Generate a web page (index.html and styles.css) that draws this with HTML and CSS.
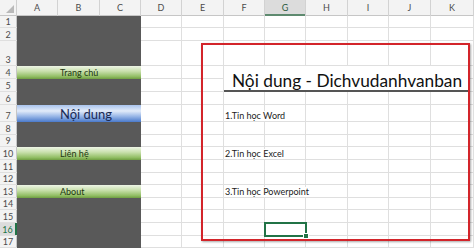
FILE: index.html
```html
<!DOCTYPE html>
<html lang="vi">
<head>
    <meta charset="UTF-8">
    <meta name="viewport" content="width=device-width, initial-scale=1.0">
    <title>Menu - Excel</title>
    <link rel="stylesheet" href="styles.css">
</head>
<body>

<div class="sheet">
    <!-- column lines and headers -->
    <div class="cols">
        <div class="head-col"><div class="corner"><span class="corner-tri"></span></div></div>
        <div class="col"><div class="col-head">A</div></div>
        <div class="col w42"><div class="col-head">B</div></div>
        <div class="col"><div class="col-head">C</div></div>
        <div class="col"><div class="col-head">D</div></div>
        <div class="col w42"><div class="col-head">E</div></div>
        <div class="col"><div class="col-head">F</div></div>
        <div class="col"><div class="col-head sel">G</div></div>
        <div class="col w42"><div class="col-head">H</div></div>
        <div class="col"><div class="col-head">I</div></div>
        <div class="col w42"><div class="col-head">J</div></div>
        <div class="col w43"><div class="col-head">K</div></div>
    </div>

    <!-- row lines and headers -->
    <div class="rows">
        <div class="row h12"><div class="row-head">1</div></div>
        <div class="row"><div class="row-head">2</div></div>
        <div class="row h25"><div class="row-head">3</div></div>
        <div class="row"><div class="row-head">4</div></div>
        <div class="row"><div class="row-head">5</div></div>
        <div class="row"><div class="row-head">6</div></div>
        <div class="row h17"><div class="row-head">7</div></div>
        <div class="row"><div class="row-head">8</div></div>
        <div class="row h12"><div class="row-head">9</div></div>
        <div class="row"><div class="row-head">10</div></div>
        <div class="row"><div class="row-head">11</div></div>
        <div class="row h12"><div class="row-head">12</div></div>
        <div class="row"><div class="row-head">13</div></div>
        <div class="row h12"><div class="row-head">14</div></div>
        <div class="row"><div class="row-head">15</div></div>
        <div class="row"><div class="row-head sel">16</div></div>
        <div class="row h12"><div class="row-head">17</div></div>
    </div>

    <!-- cell contents -->
    <div class="cells">
        <div class="panel"></div>
        <div class="btn home">Trang chủ</div>
        <div class="btn-main">Nội dung</div>
        <div class="btn contact">Liên hệ</div>
        <div class="btn about">About</div>

        <div class="title">Nội dung - Dichvudanhvanban</div>
        <div class="item word"><span>1.Tin học Word</span></div>
        <div class="item excel"><span>2.Tin học Excel</span></div>
        <div class="item ppt"><span>3.Tin học Powerpoint</span></div>

        <div class="cursor"></div>
        <div class="frame"></div>
    </div>
</div>

</body>
</html>
```
FILE: styles.css
```css
body {
    margin: 0;
    padding: 0;
    background: #fff;
    font-family: Lato, "Open Sans", sans-serif;
}
.sheet {
    display: grid;
    width: 474px;
    height: 248px;
    overflow: hidden;
}
.sheet > * {
    grid-area: 1 / 1;
}

/* columns */
.cols {
    display: flex;
}
.head-col {
    width: 17px;
}
.corner {
    height: 16px;
    box-sizing: border-box;
    background: #f3f3f3;
    border-right: 1px solid #cfcfcf;
    border-bottom: 1px solid #c6c6c6;
    display: flex;
    align-items: flex-end;
    justify-content: flex-end;
    padding: 0 2px 2px 0;
}
.corner-tri {
    width: 0;
    height: 0;
    border-left: 8px solid transparent;
    border-bottom: 8px solid #b9b9b9;
}
.col {
    width: 41px;
    box-sizing: border-box;
    border-right: 1px solid #dfdfdf;
}
.col.w42 { width: 42px; }
.col.w43 { width: 43px; }
.col-head {
    height: 16px;
    box-sizing: border-box;
    background: #f3f3f3;
    border-bottom: 1px solid #c6c6c6;
    box-shadow: 1px 0 0 #d2d2d2;
    display: flex;
    align-items: center;
    justify-content: center;
    font-size: 9px;
    color: #4b4b4b;
}
.col-head.sel {
    background: #dcdcdc;
    border-bottom: 2px solid #5e8a6f;
    color: #2c5b3e;
}

/* rows */
.rows {
    display: flex;
    flex-direction: column;
    padding-top: 16px;
}
.row {
    height: 13px;
    box-sizing: border-box;
    border-bottom: 1px solid #dfdfdf;
}
.row.h12 { height: 12px; }
.row.h17 { height: 17px; }
.row.h25 { height: 25px; }
.row-head {
    width: 17px;
    height: 100%;
    box-sizing: border-box;
    background: #f3f3f3;
    border-right: 1px solid #c6c6c6;
    display: flex;
    align-items: flex-end;
    justify-content: center;
    font-size: 9px;
    line-height: 11px;
    color: #4b4b4b;
}
.row-head.sel {
    background: #dcdcdc;
    border-right: 2px solid #217346;
    color: #217346;
}

/* cells */
.cells {
    display: grid;
    grid-template-columns: 17px 41px 42px 41px 41px 42px 41px 41px 42px 41px 42px 43px;
    grid-template-rows: 16px 12px 13px 25px 13px 13px 13px 17px 13px 12px 13px 13px 12px 13px 12px 13px 13px 12px;
}
.panel {
    grid-column: 2 / 5;
    grid-row: 2 / -1;
    background: #595959;
}
.btn {
    grid-column: 2 / 5;
    display: flex;
    align-items: center;
    padding-left: 43px;
    font-size: 9px;
    color: #1c3510;
    background: linear-gradient(#eef5e6 0%, #c9e0ad 40%, #93bf66 80%, #6f9e41 100%);
}
.home { grid-row: 5; }
.contact { grid-row: 11; }
.about { grid-row: 14; }
.btn-main {
    grid-column: 2 / 5;
    grid-row: 8;
    display: flex;
    align-items: center;
    padding-left: 43px;
    font-size: 13px;
    color: #1b2a55;
    background: linear-gradient(#a9c4ee 0%, #e2ebf9 35%, #9cb9e8 65%, #4a7acb 100%);
}

.title {
    grid-column: 7 / 13;
    grid-row: 5 / 7;
    margin-right: 4px;
    background: #fff;
    border-bottom: 2px solid #555;
    display: flex;
    align-items: flex-end;
    justify-content: center;
    font-size: 17.3px;
    line-height: 19px;
    color: #111;
    white-space: nowrap;
}
.item {
    grid-column: 7;
    display: flex;
    align-items: flex-end;
    padding: 0 0 1px 1px;
    font-size: 9px;
    line-height: 10px;
    color: #222;
    white-space: nowrap;
}
.item span {
    background: #fff;
}
.word { grid-row: 8; }
.excel { grid-row: 11; }
.ppt { grid-row: 14; }

.cursor {
    grid-column: 8;
    grid-row: 17;
    margin: -1px;
    border: 2px solid #217346;
    position: relative;
}
.cursor::after {
    content: "";
    position: absolute;
    right: -4px;
    bottom: -4px;
    width: 4px;
    height: 4px;
    background: #217346;
    border: 1px solid #fff;
}
.frame {
    grid-column: 6 / 13;
    grid-row: 4 / 19;
    margin: 2px 4px 7px 19px;
    border: 2px solid #d3242a;
    box-shadow: 1px 1px 2px rgba(0, 0, 0, 0.35);
}
```
